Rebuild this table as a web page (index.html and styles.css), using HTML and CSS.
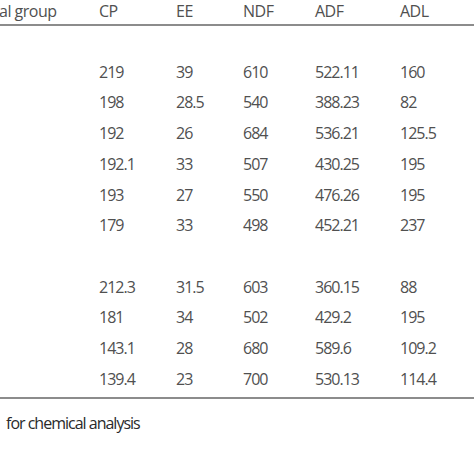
FILE: index.html
```html
<!DOCTYPE html>
<html>
<head>
<meta charset="utf-8">
<link rel="stylesheet" href="styles.css">
</head>
<body>
<div class="page">
  <table class="data">
    <colgroup>
      <col class="c0"><col class="c1"><col class="c2"><col class="c3"><col class="c4"><col class="c5">
    </colgroup>
    <thead>
      <tr><th class="grp">al group</th><th>CP</th><th>EE</th><th>NDF</th><th>ADF</th><th>ADL</th></tr>
    </thead>
    <tbody>
      <tr class="blank"><td></td><td></td><td></td><td></td><td></td><td></td></tr>
      <tr><td></td><td>219</td><td>39</td><td>610</td><td>522.11</td><td>160</td></tr>
      <tr><td></td><td>198</td><td>28.5</td><td>540</td><td>388.23</td><td>82</td></tr>
      <tr><td></td><td>192</td><td>26</td><td>684</td><td>536.21</td><td>125.5</td></tr>
      <tr><td></td><td>192.1</td><td>33</td><td>507</td><td>430.25</td><td>195</td></tr>
      <tr><td></td><td>193</td><td>27</td><td>550</td><td>476.26</td><td>195</td></tr>
      <tr><td></td><td>179</td><td>33</td><td>498</td><td>452.21</td><td>237</td></tr>
      <tr class="blank"><td></td><td></td><td></td><td></td><td></td><td></td></tr>
      <tr><td></td><td>212.3</td><td>31.5</td><td>603</td><td>360.15</td><td>88</td></tr>
      <tr><td></td><td>181</td><td>34</td><td>502</td><td>429.2</td><td>195</td></tr>
      <tr><td></td><td>143.1</td><td>28</td><td>680</td><td>589.6</td><td>109.2</td></tr>
      <tr class="last"><td></td><td>139.4</td><td>23</td><td>700</td><td>530.13</td><td>114.4</td></tr>
    </tbody>
  </table>
  <p class="note">for chemical analysis</p>
</div>
</body>
</html>
```

FILE: styles.css
```css
html, body {
  margin: 0;
  padding: 0;
  background: #fff;
}
.page {
  width: 474px;
  height: 474px;
  overflow: hidden;
  font-family: "Open Sans", "DejaVu Sans", sans-serif;
  font-size: 16px;
  color: #505050;
}
.data {
  width: 474px;
  border-collapse: collapse;
  table-layout: fixed;
}
.c0 { width: 99px; }
.c1 { width: 77px; }
.c2 { width: 67px; }
.c3 { width: 72px; }
.c4 { width: 85px; }
.c5 { width: 74px; }
.data th {
  font-weight: 400;
  text-align: left;
  padding: 0 0 2px 0;
  line-height: 22px;
  letter-spacing: -0.5px;
  white-space: nowrap;
  border-bottom: 2px solid #8c8c8c;
}
.data th.grp {
  text-indent: -1px;
}
.data td {
  padding: 0;
  height: 30.7px;
  line-height: 30.7px;
  letter-spacing: -1px;
  white-space: nowrap;
}
.data tr.last td {
  padding-bottom: 3px;
  border-bottom: 2px solid #8c8c8c;
}
.note {
  margin: 14px 0 0 6px;
  line-height: 20px;
  color: #2a2a2a;
  letter-spacing: -1px;
}
```
